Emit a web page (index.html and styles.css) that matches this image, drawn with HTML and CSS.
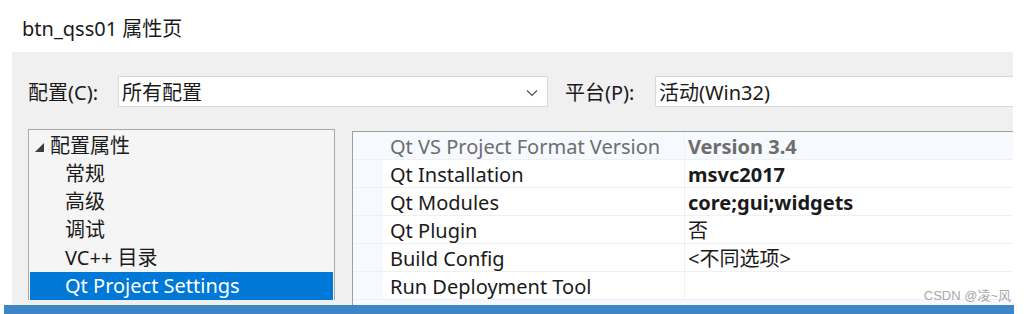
FILE: index.html
```html
<!DOCTYPE html>
<html lang="zh-cn">
<head>
    <meta charset="UTF-8">
    <title>btn_qss01 属性页</title>
    <link rel="stylesheet" href="styles.css">
</head>
<body>

    <div class="titulo">btn_qss01 属性页</div>

    <div class="painel">
        <!-- linha de configuração e plataforma -->
        <div class="config">
            <span class="rotulo">配置(C):</span>
            <div class="combo combo-config">
                <span>所有配置</span>
                <svg class="seta" width="12" height="8" viewBox="0 0 12 8"><path d="M1 1.5 L6 6.5 L11 1.5" fill="none" stroke="#505050" stroke-width="1.2"/></svg>
            </div>
            <span class="rotulo rotulo-plat">平台(P):</span>
            <div class="combo combo-plat">
                <span>活动(Win32)</span>
            </div>
        </div>

        <div class="conteudo">
            <!-- árvore de propriedades -->
            <div class="arvore">
                <div class="no raiz">
                    <svg class="tri" width="9" height="9" viewBox="0 0 9 9"><path d="M9 0 L9 9 L0 9 Z" fill="#3c3c3c"/></svg>
                    <span>配置属性</span>
                </div>
                <div class="no filho">常规</div>
                <div class="no filho">高级</div>
                <div class="no filho">调试</div>
                <div class="no filho">VC++ 目录</div>
                <div class="no filho selecionado">Qt Project Settings</div>
            </div>

            <!-- grade de propriedades -->
            <div class="grade">
                <div class="linha cabecalho">
                    <div class="margem"></div>
                    <div class="nome">Qt VS Project Format Version</div>
                    <div class="valor negrito">Version 3.4</div>
                </div>
                <div class="linha">
                    <div class="margem"></div>
                    <div class="nome">Qt Installation</div>
                    <div class="valor negrito">msvc2017</div>
                </div>
                <div class="linha">
                    <div class="margem"></div>
                    <div class="nome">Qt Modules</div>
                    <div class="valor negrito">core;gui;widgets</div>
                </div>
                <div class="linha">
                    <div class="margem"></div>
                    <div class="nome">Qt Plugin</div>
                    <div class="valor">否</div>
                </div>
                <div class="linha">
                    <div class="margem"></div>
                    <div class="nome">Build Config</div>
                    <div class="valor">&lt;不同选项&gt;</div>
                </div>
                <div class="linha">
                    <div class="margem"></div>
                    <div class="nome">Run Deployment Tool</div>
                    <div class="valor"></div>
                </div>
                <span class="marca">CSDN @凌~风</span>
            </div>
        </div>
    </div>

    <div class="barra"></div>

</body>
</html>
```

FILE: styles.css
```css
body {
    margin: 0;
    background: #ffffff;
    font-family: "Noto Sans", "Noto Sans CJK SC", sans-serif;
    color: #1a1a1a;
    overflow: hidden;
}
.titulo {
    height: 52px;
    padding-left: 22px;
    font-size: 20px;
    line-height: 58px;
    box-sizing: border-box;
}
.painel {
    margin-left: 12px;
    width: 1001px;
    height: 253px;
    background: #f0f0f0;
    padding: 24px 0 0 16px;
    box-sizing: border-box;
}
.config {
    display: flex;
    align-items: center;
    height: 31px;
}
.rotulo {
    width: 90px;
    font-size: 20px;
}
.rotulo-plat {
    margin-left: 17px;
}
.combo {
    height: 31px;
    box-sizing: border-box;
    background: #ffffff;
    border: 1px solid #d9d9d9;
    display: flex;
    align-items: center;
    padding-left: 3px;
    font-size: 20px;
}
.combo-config {
    width: 430px;
    justify-content: space-between;
    padding-right: 9px;
}
.combo-plat {
    flex: 1;
    border-right: none;
}
.seta {
    margin-top: 2px;
}
.conteudo {
    display: flex;
    margin-top: 22px;
    height: 176px;
}
.arvore {
    width: 307px;
    height: 171px;
    box-sizing: border-box;
    background: #f5f5f5;
    border: 1px solid #a9a9a9;
    border-bottom: none;
    padding: 2px 1px 0 1px;
}
.no {
    height: 28px;
    line-height: 28px;
    font-size: 20px;
    white-space: nowrap;
}
.raiz {
    display: flex;
    align-items: center;
    padding-left: 5px;
}
.tri {
    margin-right: 6px;
    margin-top: 2px;
}
.filho {
    padding-left: 35px;
}
.selecionado {
    background: #0078d7;
    color: #ffffff;
}
.grade {
    position: relative;
    flex: 1;
    margin-left: 17px;
    margin-top: 2px;
    background: #f6f9fd;
    border-top: 1px solid #a0a0a0;
    border-left: 1px solid #a0a0a0;
}
.linha {
    display: grid;
    grid-template-columns: 30px 302px 1fr;
    height: 28px;
    box-sizing: border-box;
    line-height: 29px;
    font-size: 20px;
    border-bottom: 1px solid #f0f0f0;
    overflow: hidden;
}
.linha.cabecalho {
    color: #6d6d6d;
}
.nome {
    padding-left: 7px;
    background: #ffffff;
    border-right: 1px solid #f0f0f0;
    white-space: nowrap;
}
.valor {
    padding-left: 3px;
    background: #ffffff;
    white-space: nowrap;
}
.cabecalho .nome,
.cabecalho .valor {
    background: #f6f9fd;
}
.negrito {
    font-weight: bold;
}
.marca {
    position: absolute;
    right: 2px;
    bottom: 1px;
    font-family: "Liberation Sans", "Noto Sans CJK SC", sans-serif;
    font-size: 13px;
    color: #a8a8a8;
}
.barra {
    margin-left: 4px;
    width: 1010px;
    height: 9px;
    background: #3d86c6;
}
```
